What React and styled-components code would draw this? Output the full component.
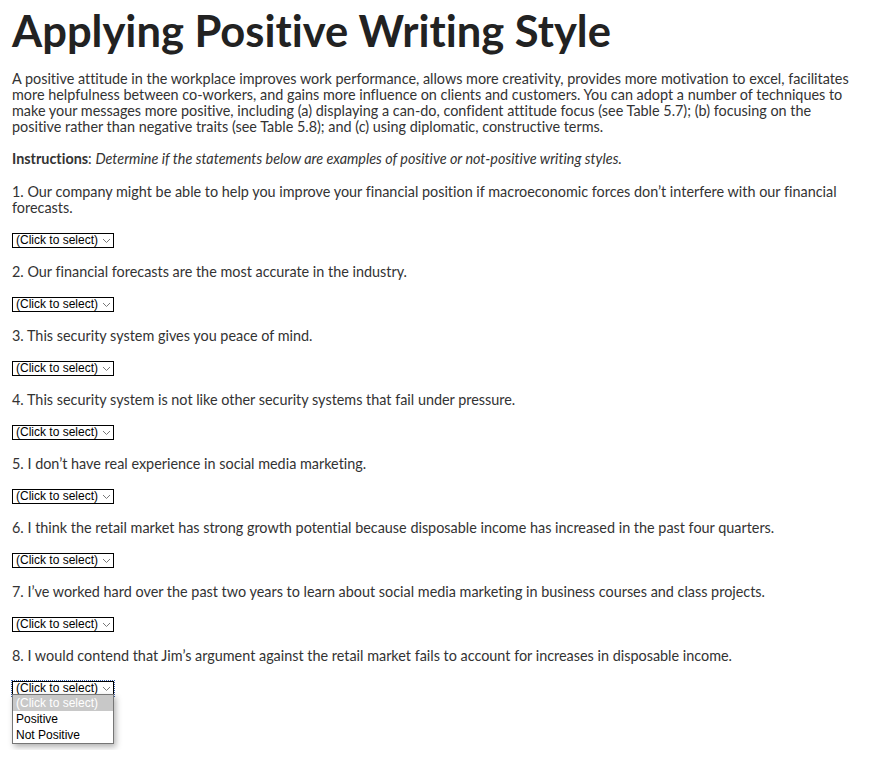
import React from 'react'
import styled, { createGlobalStyle } from 'styled-components'

const GlobalStyle = createGlobalStyle`
  html, body {
    margin: 0;
    padding: 0;
    background: #ffffff;
  }
`

const Page = styled.div`
  padding: 0 12px 40px 12px;
  font-family: Lato, 'Liberation Sans', sans-serif;
  font-size: 14.4px;
  line-height: 16px;
  color: #333333;
  font-variant-ligatures: none;
`

const Title = styled.h1`
  margin: 2px 0 13px 0;
  font-family: Lato, 'Liberation Sans', sans-serif;
  font-size: 43.5px;
  line-height: 56px;
  font-weight: 700;
  color: #222222;
`

const Para = styled.p`
  margin: 0 0 ${p => p.$gap || 16}px 0;
`

const Question = styled.p`
  margin: 0 0 15px 0;
  padding-top: 2px;
`

const SelectRow = styled.div`
  position: relative;
  height: 15px;
  margin: 0 0 16px 0;
`

const SelectBox = styled.div`
  display: inline-flex;
  align-items: center;
  box-sizing: border-box;
  width: 102px;
  height: 15px;
  padding: 0 2px 0 3px;
  border: 1px solid #000000;
  font-family: Arial, 'Liberation Sans', sans-serif;
  font-size: 12px;
  line-height: 13px;
  color: #000000;
  outline: ${p => (p.$focused ? '1px dotted #3a5fa8' : 'none')};
  outline-offset: 0;
`

const SelectText = styled.span`
  flex: 1;
  white-space: nowrap;
`

const Chevron = styled.svg`
  width: 9px;
  height: 6px;
  margin-left: 1px;
`

const List = styled.ul`
  position: absolute;
  left: 0;
  top: 15px;
  z-index: 2;
  box-sizing: border-box;
  width: 102px;
  margin: 0;
  padding: 0;
  list-style: none;
  background: #ffffff;
  border: 1px solid #767676;
  box-shadow: 2px 3px 6px rgba(0, 0, 0, 0.3);
  font-family: Arial, 'Liberation Sans', sans-serif;
  font-size: 12px;
  line-height: 16px;
`

const Option = styled.li`
  padding: 0 3px;
  white-space: nowrap;
  background: ${p => (p.$active ? '#c8c8c8' : '#ffffff')};
  color: ${p => (p.$active ? '#ffffff' : '#000000')};
`

const options = ['(Click to select)', 'Positive', 'Not Positive']

const questions = [
  '1. Our company might be able to help you improve your financial position if macroeconomic forces don’t interfere with our financial forecasts.',
  '2. Our financial forecasts are the most accurate in the industry.',
  '3. This security system gives you peace of mind.',
  '4. This security system is not like other security systems that fail under pressure.',
  '5. I don’t have real experience in social media marketing.',
  '6. I think the retail market has strong growth potential because disposable income has increased in the past four quarters.',
  '7. I’ve worked hard over the past two years to learn about social media marketing in business courses and class projects.',
  '8. I would contend that Jim’s argument against the retail market fails to account for increases in disposable income.',
]

function Select({ open }) {
  return (
    <SelectRow>
      <SelectBox $focused={open}>
        <SelectText>{options[0]}</SelectText>
        <Chevron viewBox="0 0 9 6">
          <path d="M1 1 L4.5 4.5 L8 1" fill="none" stroke="#777777" strokeWidth="1" />
        </Chevron>
      </SelectBox>
      {open && (
        <List>
          {options.map((o, i) => (
            <Option key={o} $active={i === 0}>{o}</Option>
          ))}
        </List>
      )}
    </SelectRow>
  )
}

export default function App() {
  return (
    <Page>
      <GlobalStyle />
      <Title>Applying Positive Writing Style</Title>
      <Para>
        A positive attitude in the workplace improves work performance, allows more creativity, provides more
        motivation to excel, facilitates more helpfulness between co-workers, and gains more influence on clients
        and customers. You can adopt a number of techniques to make your messages more positive, including (a)
        displaying a can-do, confident attitude focus (see Table 5.7); (b) focusing on the positive rather than
        negative traits (see Table 5.8); and (c) using diplomatic, constructive terms.
      </Para>
      <Para $gap={15}>
        <strong>Instructions</strong>: <em>Determine if the statements below are examples of positive or not-positive writing styles.</em>
      </Para>
      {questions.map((q, i) => (
        <React.Fragment key={q}>
          <Question>{q}</Question>
          <Select open={i === questions.length - 1} />
        </React.Fragment>
      ))}
    </Page>
  )
}
